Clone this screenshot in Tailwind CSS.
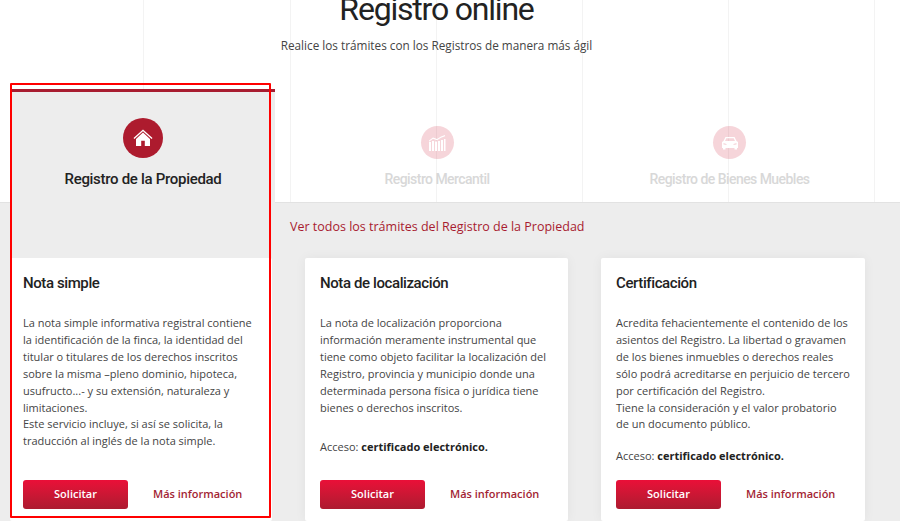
<!DOCTYPE html>
<html lang="es">
<head>
    <meta charset="UTF-8">
    <script src="https://cdn.jsdelivr.net/npm/@tailwindcss/browser@4"></script>
    <title>Registro online</title>
</head>
<body class="bg-white">
<div class="relative h-[521px] w-[900px] overflow-hidden font-['Open_Sans',sans-serif] text-[#444]">
    <!-- fondo de lineas verticales -->
    <div class="absolute left-0 top-0 flex h-[202px] pl-[143px]">
        <div class="w-[147px] border-l border-[#f3f3f3]"></div>
        <div class="w-[146px] border-l border-[#f3f3f3]"></div>
        <div class="w-[146px] border-l border-[#f3f3f3]"></div>
        <div class="w-[146px] border-l border-[#f3f3f3]"></div>
        <div class="w-[146px] border-l border-[#f3f3f3]"></div>
        <div class="w-[1px] border-l border-[#f3f3f3]"></div>
    </div>

    <header class="relative flex h-[83px] flex-col pl-[11px] pr-[38px] text-center">
        <h1 class="mt-[-11px] font-['Roboto',sans-serif] text-[32px] leading-[40px] font-normal tracking-[-1.2px] text-[#222]">Registro online</h1>
        <p class="mt-[7px] text-[11.75px] leading-[18px] text-[#444]">Realice los trámites con los Registros de manera más ágil</p>
    </header>

    <nav class="relative flex h-[120px] border-b border-[#e2e2e2] pt-[6px]">
        <div class="ml-[11px] flex h-[119px] w-[264px] flex-col items-center border-t-[3px] border-[#a81c30] bg-[#ededed] pt-[26px]">
            <span class="flex h-[40px] w-[40px] items-center justify-center rounded-full bg-[#ad1b2e]">
                <svg class="h-[22px] w-[22px]" viewBox="0 0 22 22" fill="#fff">
                    <path d="M11 2.500 1.500 11l.9 1L11 4.300 19.600 12l.9-1z"/>
                    <path d="M11 5.600 4 11.900V19h5.200v-5.200h3.600V19H18v-7.100z"/>
                </svg>
            </span>
            <span class="mt-[11px] font-['Roboto',sans-serif] text-[15px] leading-[20px] font-medium tracking-[-0.3px] text-[#222]">Registro de la Propiedad</span>
        </div>
        <div class="ml-[15px] flex w-[293px] flex-col items-center pt-[37px] pl-[1px]">
            <span class="flex h-[33px] w-[33px] items-center justify-center rounded-full bg-[#d22d46]/20">
                <svg class="h-[20px] w-[20px]" viewBox="0 0 20 20" fill="#fff">
                    <path d="M2 9h2v9H2zM5 8h2v10H5zM8 8.500h2V18H8zM11 8h2v10h-2zM14 7h2v11h-2zM17 6h1.500v12H17z"/>
                    <path d="M2 7.500 6 4.500l4 1.500 4-2.500 4-1.500v1.200l-4 1.500-4 2.500-4-1.500-4 3z"/>
                </svg>
            </span>
            <span class="mt-[10px] font-['Roboto',sans-serif] text-[14px] leading-[20px] font-medium tracking-[-0.55px] text-[#d8d8d8]">Registro Mercantil</span>
        </div>
        <div class="flex w-[293px] flex-col items-center pt-[37px]">
            <span class="flex h-[33px] w-[33px] items-center justify-center rounded-full bg-[#d22d46]/20">
                <svg class="h-[20px] w-[20px]" viewBox="0 0 20 20" fill="#fff">
                    <path d="M5.500 4h9l2 4 1.500 1v6h-1v1.500h-2.500V15h-9v1.500H3V15H2V9l1.500-1zm.8 1.300L5 8h10l-1.300-2.700zM3.500 10v1.500l3 .5v-1zM16.500 10l-3 1v1l3-.5z" fill-rule="evenodd"/>
                </svg>
            </span>
            <span class="mt-[10px] font-['Roboto',sans-serif] text-[14px] leading-[20px] font-medium tracking-[-0.55px] text-[#d8d8d8]">Registro de Bienes Muebles</span>
        </div>
    </nav>

    <main class="h-[318px] bg-[#ededed]">
        <div class="flex h-[55px] pl-[290px] pt-[15px]">
            <a class="text-[12.5px] leading-[18px] text-[#a81c30]">Ver todos los trámites del Registro de la Propiedad</a>
        </div>
        <div class="flex items-start gap-[33px] pl-[10px]">
            <article class="flex h-[263px] w-[262px] flex-col rounded-[2px] bg-white px-[13px]">
                <h2 class="mt-[15px] font-['Roboto',sans-serif] text-[15px] leading-[20px] font-medium tracking-[-0.4px] text-[#222]">Nota simple</h2>
                <p class="mt-[22px] h-[144px] text-[11px] leading-[16.9px]">La nota simple informativa registral contiene la identificación de la finca, la identidad del titular o titulares de los derechos inscritos sobre la misma –pleno dominio, hipoteca, usufructo...- y su extensión, naturaleza y limitaciones.<br>Este servicio incluye, si así se solicita, la traducción al inglés de la nota simple.</p>
                <div class="mt-[21px] flex items-center">
                    <button class="h-[29px] w-[105px] rounded-[3px] bg-gradient-to-b from-[#ea0f38] to-[#ad1a30] text-[11px] font-semibold text-white">Solicitar</button>
                    <a class="ml-[25px] text-[11px] font-semibold text-[#a31f34]">Más información</a>
                </div>
            </article>
            <article class="flex h-[263px] w-[263px] flex-col rounded-[2px] bg-white px-[15px] shadow-[0_0_12px_rgba(0,0,0,0.05)]">
                <h2 class="mt-[15px] font-['Roboto',sans-serif] text-[15px] leading-[20px] font-medium tracking-[-0.4px] text-[#222]">Nota de localización</h2>
                <p class="mt-[22px] h-[144px] text-[11px] leading-[16.9px]">La nota de localización proporciona información meramente instrumental que tiene como objeto facilitar la localización del Registro, provincia y municipio donde una determinada persona física o jurídica tiene bienes o derechos inscritos.<span class="mt-[23px] block">Acceso: <b class="text-[#222]">certificado electrónico.</b></span></p>
                <div class="mt-[21px] flex items-center">
                    <button class="h-[29px] w-[105px] rounded-[3px] bg-gradient-to-b from-[#ea0f38] to-[#ad1a30] text-[11px] font-semibold text-white">Solicitar</button>
                    <a class="ml-[25px] text-[11px] font-semibold text-[#a31f34]">Más información</a>
                </div>
            </article>
            <article class="flex h-[263px] w-[264px] flex-col rounded-[2px] bg-white px-[15px] shadow-[0_0_12px_rgba(0,0,0,0.05)]">
                <h2 class="mt-[15px] font-['Roboto',sans-serif] text-[15px] leading-[20px] font-medium tracking-[-0.4px] text-[#222]">Certificación</h2>
                <p class="mt-[22px] h-[144px] text-[11px] leading-[16.9px]">Acredita fehacientemente el contenido de los asientos del Registro. La libertad o gravamen de los bienes inmuebles o derechos reales sólo podrá acreditarse en perjuicio de tercero por certificación del Registro.<br>Tiene la consideración y el valor probatorio de un documento público.<span class="mt-[15px] block">Acceso: <b class="text-[#222]">certificado electrónico.</b></span></p>
                <div class="mt-[21px] flex items-center">
                    <button class="h-[29px] w-[105px] rounded-[3px] bg-gradient-to-b from-[#ea0f38] to-[#ad1a30] text-[11px] font-semibold text-white">Solicitar</button>
                    <a class="ml-[25px] text-[11px] font-semibold text-[#a31f34]">Más información</a>
                </div>
            </article>
        </div>
    </main>

    <!-- recuadro rojo de resaltado -->
    <div class="pointer-events-none absolute left-[10px] top-[83px] h-[435px] w-[261px] rounded-[1px] border-2 border-[#ff0000]"></div>
</div>
</body>
</html>
